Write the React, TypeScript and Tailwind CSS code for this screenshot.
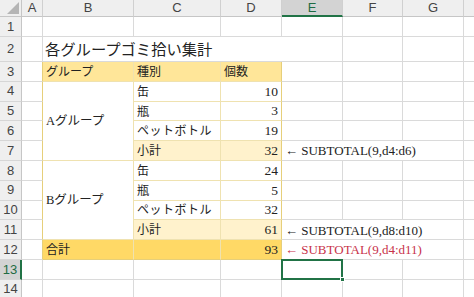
import React from "react";

const serif = "font-['Liberation_Serif','Noto_Sans_CJK_JP',serif]";
const sans = "font-['Liberation_Sans','Noto_Sans',sans-serif]";

const grid = "border-r border-b border-[#dadada]";
const tbl = "border-r border-b border-[#efe2b0]";

// H sits mostly off-screen, so its label isn't drawn
const columns = ["A", "B", "C", "D", "E", "F", "G", ""];

function ColHeader(props: { label: string; active?: boolean }) {
  const { label, active } = props;
  return (
    <div
      className={`flex items-center justify-center text-[13px] ${sans} border-r border-[#d0d0d0] ${
        active
          ? "bg-[#d3d3d3] text-[#1e6b43] border-b-2 border-b-[#217346]"
          : "bg-[#efefef] text-[#444] border-b border-b-[#c6c6c6]"
      }`}
    >
      {label}
    </div>
  );
}

function RowHeader(props: { n: number; active?: boolean }) {
  const { n, active } = props;
  return (
    <div
      className={`flex items-center justify-center text-[13px] ${sans} border-b border-[#d6d6d6] ${
        active
          ? "bg-[#d3d3d3] text-[#1e6b43] border-r-2 border-r-[#217346]"
          : "bg-[#efefef] text-[#444] border-r border-r-[#c6c6c6]"
      }`}
    >
      {n}
    </div>
  );
}

function Blank(props: { count: number }) {
  return (
    <>
      {Array.from({ length: props.count }).map((_, i) => (
        <div key={i} className={grid} />
      ))}
    </>
  );
}

type DataRow = { n: number; kind: string; value: number; sub?: boolean; formula?: string };

const rows: DataRow[] = [
  { n: 4, kind: "缶", value: 10 },
  { n: 5, kind: "瓶", value: 3 },
  { n: 6, kind: "ペットボトル", value: 19 },
  { n: 7, kind: "小計", value: 32, sub: true, formula: "SUBTOTAL(9,d4:d6)" },
  { n: 8, kind: "缶", value: 24 },
  { n: 9, kind: "瓶", value: 5 },
  { n: 10, kind: "ペットボトル", value: 32 },
  { n: 11, kind: "小計", value: 61, sub: true, formula: "SUBTOTAL(9,d8:d10)" },
];

export default function App() {
  return (
    <div className={`w-[474px] h-[297px] overflow-hidden bg-white text-[#222] ${serif}`}>
      <div className="grid grid-cols-[22px_21px_91px_87px_61px_61px_60px_61px_61px] grid-rows-[17px_20px_25px_repeat(12,19.8px)]">
        {/* column headers */}
        <div className="relative bg-[#efefef] border-r border-b border-[#c6c6c6]">
          <div className="absolute right-[2px] bottom-[2px] w-0 h-0 border-l-[12px] border-l-transparent border-b-[12px] border-b-[#b5b5b5]" />
        </div>
        {columns.map((c, i) => (
          <ColHeader key={i} label={c} active={c === "E"} />
        ))}

        {/* row 1 */}
        <RowHeader n={1} />
        <Blank count={8} />

        {/* row 2 */}
        <RowHeader n={2} />
        <div className={grid} />
        <div className={`${grid} col-span-3 flex items-end pl-[2px] pb-[4px] text-[15.3px] leading-none whitespace-nowrap border-r-0`}>
          各グループゴミ拾い集計
        </div>
        <Blank count={4} />

        {/* row 3 */}
        <RowHeader n={3} />
        <div className={`${grid} border-r-[#e6cf7a]`} />
        <div className={`${tbl} bg-[#ffe699] flex items-center pl-[3px] pt-[1px] text-[12px]`}>グループ</div>
        <div className={`${tbl} bg-[#ffe699] flex items-center pl-[3px] pt-[1px] text-[12px]`}>種別</div>
        <div className={`${tbl} bg-[#ffe699] flex items-center pl-[3px] pt-[1px] text-[12px] border-r-[#e6cf7a]`}>個数</div>
        <Blank count={4} />

        {/* rows 4 - 11 */}
        {rows.map((r) => (
          <React.Fragment key={r.n}>
            <RowHeader n={r.n} />
            <div className={`${grid} border-r-[#e6cf7a]`} />
            {(r.n === 4 || r.n === 8) && (
              <div className={`${tbl} row-span-4 flex items-center pl-[3px] text-[12.5px]`}>
                {r.n === 4 ? "Aグループ" : "Bグループ"}
              </div>
            )}
            <div
              className={`${tbl} flex items-center pl-[3px] pt-[1px] text-[12px] ${r.sub ? "bg-[#fff2cc]" : ""} ${
                r.n === 6 || r.n === 10 ? "tracking-[0.5px]" : ""
              }`}
            >
              {r.kind}
            </div>
            <div
              className={`${tbl} flex items-center justify-end pr-[3px] pt-[1px] text-[13.5px] border-r-[#e6cf7a] ${
                r.sub ? "bg-[#fff2cc]" : ""
              }`}
            >
              {r.value}
            </div>
            {r.formula ? (
              <>
                <div className={`${grid} col-span-3 flex items-center pl-[3px] pt-[1px] text-[13px] whitespace-nowrap`}>
                  ← {r.formula}
                </div>
                <div className={grid} />
              </>
            ) : (
              <Blank count={4} />
            )}
          </React.Fragment>
        ))}

        {/* row 12 */}
        <RowHeader n={12} />
        <div className={`${grid} border-r-[#e6cf7a]`} />
        <div className={`${tbl} bg-[#ffd966] border-b-[#e6cf7a] flex items-center pl-[3px] pt-[1px] text-[12px]`}>合計</div>
        <div className={`${tbl} bg-[#ffd966] border-b-[#e6cf7a]`} />
        <div className={`${tbl} bg-[#ffd966] border-b-[#e6cf7a] border-r-[#e6cf7a] flex items-center justify-end pr-[3px] pt-[1px] text-[13.5px]`}>
          93
        </div>
        <div className={`${grid} col-span-3 flex items-center pl-[3px] pt-[1px] text-[13px] whitespace-nowrap text-[#c8324a]`}>
          ← SUBTOTAL(9,d4:d11)
        </div>
        <div className={grid} />

        {/* row 13 */}
        <RowHeader n={13} active />
        <Blank count={4} />
        <div className={`${grid} relative`}>
          <div className="absolute -left-[1px] -top-[1px] right-[-1px] bottom-[-1px] border-2 border-[#217346]" />
          <div className="absolute -right-[3px] -bottom-[3px] w-[5px] h-[5px] bg-[#217346] border border-white" />
        </div>
        <Blank count={3} />

        {/* row 14 */}
        <RowHeader n={14} />
        <Blank count={8} />
      </div>
    </div>
  );
}
